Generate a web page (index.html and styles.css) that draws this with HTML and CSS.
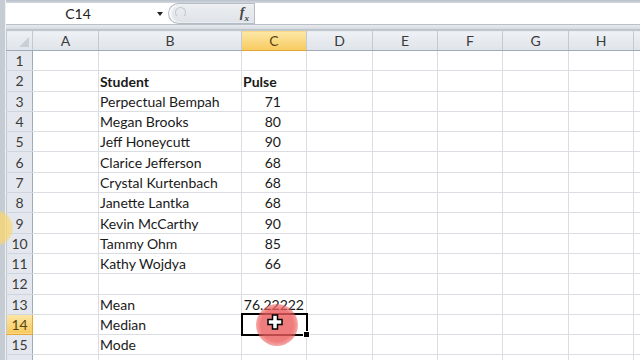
FILE: index.html
```html
<!DOCTYPE html>
<html lang="en">
<head>
    <meta charset="UTF-8">
    <title>Pulse - Excel</title>
    <link rel="stylesheet" href="styles.css">
</head>
<body>
    <div class="window">
        <div class="top-strip"></div>
        <div class="formula-bar">
            <div class="name-box">
                <span class="cell-ref">C14</span>
                <span class="drop-arrow"></span>
            </div>
            <div class="fx-capsule">
                <span class="grip"></span>
                <span class="fx">f<sub>x</sub></span>
            </div>
            <div class="formula-input"></div>
        </div>
        <div class="bar-gap"></div>

        <div class="sheet">
            <table class="grid">
                <colgroup>
                    <col class="w-rh">
                    <col class="w-a">
                    <col class="w-b">
                    <col class="w-c">
                    <col class="w-d">
                    <col class="w-e">
                    <col class="w-f">
                    <col class="w-g">
                    <col class="w-h">
                    <col class="w-i">
                </colgroup>
                <thead>
                    <tr>
                        <th class="corner"><span class="corner-tri"></span></th>
                        <th>A</th>
                        <th>B</th>
                        <th class="sel-head">C</th>
                        <th>D</th>
                        <th>E</th>
                        <th>F</th>
                        <th>G</th>
                        <th>H</th>
                        <th></th>
                    </tr>
                </thead>
                <tbody>
                    <tr><th>1</th><td></td><td></td><td></td><td></td><td></td><td></td><td></td><td></td><td></td></tr>
                    <tr><th>2</th><td></td><td class="bold">Student</td><td class="bold">Pulse</td><td></td><td></td><td></td><td></td><td></td><td></td></tr>
                    <tr><th>3</th><td></td><td>Perpectual Bempah</td><td class="num">71</td><td></td><td></td><td></td><td></td><td></td><td></td></tr>
                    <tr><th>4</th><td></td><td>Megan Brooks</td><td class="num">80</td><td></td><td></td><td></td><td></td><td></td><td></td></tr>
                    <tr><th>5</th><td></td><td>Jeff Honeycutt</td><td class="num">90</td><td></td><td></td><td></td><td></td><td></td><td></td></tr>
                    <tr><th>6</th><td></td><td>Clarice Jefferson</td><td class="num">68</td><td></td><td></td><td></td><td></td><td></td><td></td></tr>
                    <tr><th>7</th><td></td><td>Crystal Kurtenbach</td><td class="num">68</td><td></td><td></td><td></td><td></td><td></td><td></td></tr>
                    <tr><th>8</th><td></td><td>Janette Lantka</td><td class="num">68</td><td></td><td></td><td></td><td></td><td></td><td></td></tr>
                    <tr><th>9</th><td></td><td>Kevin McCarthy</td><td class="num">90</td><td></td><td></td><td></td><td></td><td></td><td></td></tr>
                    <tr><th>10</th><td></td><td>Tammy Ohm</td><td class="num">85</td><td></td><td></td><td></td><td></td><td></td><td></td></tr>
                    <tr><th>11</th><td></td><td>Kathy Wojdya</td><td class="num">66</td><td></td><td></td><td></td><td></td><td></td><td></td></tr>
                    <tr><th>12</th><td></td><td></td><td></td><td></td><td></td><td></td><td></td><td></td><td></td></tr>
                    <tr><th>13</th><td></td><td>Mean</td><td class="value">76.22222</td><td></td><td></td><td></td><td></td><td></td><td></td></tr>
                    <tr><th class="sel-head">14</th><td></td><td>Median</td><td class="active"></td><td></td><td></td><td></td><td></td><td></td><td></td></tr>
                    <tr><th>15</th><td></td><td>Mode</td><td></td><td></td><td></td><td></td><td></td><td></td><td></td></tr>
                    <tr><th></th><td></td><td></td><td></td><td></td><td></td><td></td><td></td><td></td><td></td></tr>
                </tbody>
            </table>

            <!-- click highlight from the screen recorder -->
            <div class="click-glow red"></div>
            <svg class="cursor" width="16" height="16" viewBox="0 0 16 16">
                <path d="M5.5 1h5v4.5H15v5h-4.5V15h-5v-4.5H1v-5h4.5z" fill="#fff" stroke="#000" stroke-width="1.5"/>
            </svg>
        </div>
    </div>
    <div class="click-glow yellow"></div>
</body>
</html>
```

FILE: styles.css
```css
html, body {
    margin: 0;
    padding: 0;
}
body {
    position: relative;
    width: 640px;
    height: 360px;
    overflow: hidden;
    background-color: #c6ccd4;
    font-family: Lato, "Liberation Sans", sans-serif;
}
.window {
    display: flex;
    flex-direction: column;
    height: 360px;
    margin-left: 5px;
    background-color: #fff;
    border-left: 1px solid #eef1f4;
}
.top-strip {
    height: 3px;
    background: linear-gradient(#b8c0ca, #d3d8de);
}
.formula-bar {
    display: flex;
    height: 21px;
    background-color: #fff;
    border-bottom: 1px solid #b9c0c8;
}
.name-box {
    display: flex;
    align-items: center;
    width: 162px;
}
.cell-ref {
    width: 144px;
    text-align: center;
    font-size: 14px;
    color: #222;
}
.drop-arrow {
    width: 0;
    height: 0;
    margin-left: 7px;
    border-left: 3px solid transparent;
    border-right: 3px solid transparent;
    border-top: 4px solid #222;
}
.fx-capsule {
    display: flex;
    align-items: center;
    justify-content: space-between;
    width: 86px;
    padding: 0 5px 0 6px;
    box-sizing: border-box;
    background: linear-gradient(#eceef1, #dfe3e8);
    border: 1px solid #b4bcc6;
    border-right: none;
    border-radius: 11px 0 0 11px;
    box-shadow: inset 2px 0 2px #fff;
}
.grip {
    width: 9px;
    height: 9px;
    border-radius: 50%;
    border: 1px solid #c3c8ce;
    border-bottom-color: transparent;
    margin-top: -2px;
}
.fx {
    font-family: "Liberation Serif", serif;
    font-style: italic;
    font-weight: bold;
    font-size: 14px;
    color: #444;
}
.fx sub {
    font-size: 9px;
}
.formula-input {
    flex: 1;
    border-left: 1px solid #b4bcc6;
    background-color: #fff;
}
.bar-gap {
    height: 4px;
    background: linear-gradient(#e6e9ed, #d7dce2);
    border-bottom: 1px solid #bcc3cb;
}

.sheet {
    position: relative;
    flex: 1;
    overflow: hidden;
}
.grid {
    border-collapse: collapse;
    table-layout: fixed;
    width: 660px;
    font-size: 14px;
    color: #1a1a1a;
}
.w-rh { width: 26px; }
.w-a { width: 66px; }
.w-b { width: 143px; }
.w-c { width: 65px; }
.w-d { width: 66px; }
.w-e { width: 65px; }
.w-f { width: 65px; }
.w-g { width: 66px; }
.w-h { width: 65px; }
.w-i { width: 33px; }

.grid tr {
    height: 20.3px;
}
.grid thead tr {
    height: 20px;
}
.grid th {
    font-weight: normal;
    color: #3b3b3b;
    background: linear-gradient(#eef1f5, #dfe4ea);
    border: 1px solid #c2c9d1;
    padding: 0;
    text-align: center;
    font-size: 14px;
}
.grid thead th {
    border-bottom-color: #9fabb8;
}
.grid tbody th {
    background: #e4e8ee;
    border-right-color: #9fabb8;
    border-top-color: #cfd5dc;
    border-bottom-color: #cfd5dc;
}
.grid th.sel-head {
    background: linear-gradient(#fce7a6, #f7ca5e);
    color: #5a4310;
    border-bottom-color: #e2a83a;
}
.grid tbody th.sel-head {
    border-right-color: #e2a83a;
}
.corner {
    position: relative;
}
.corner-tri {
    position: absolute;
    right: 3px;
    bottom: 3px;
    width: 0;
    height: 0;
    border-left: 10px solid transparent;
    border-bottom: 10px solid #c9cfd6;
}
.grid td {
    border: 1px solid #dadde1;
    padding: 0 3px 1px 1px;
    vertical-align: bottom;
    line-height: 17px;
    white-space: nowrap;
    overflow: visible;
}
.grid td.bold {
    font-weight: bold;
}
.grid td.num {
    text-align: right;
    padding-right: 25px;
}
.grid td.value {
    text-align: right;
    padding-right: 2px;
}
.grid td.active {
    position: relative;
    outline: 2px solid #000;
    outline-offset: -1px;
}
.grid td.active::after {
    content: "";
    position: absolute;
    right: -4px;
    bottom: -4px;
    width: 5px;
    height: 5px;
    background-color: #000;
    border: 1px solid #fff;
}

.click-glow {
    position: absolute;
    border-radius: 50%;
    pointer-events: none;
}
.click-glow.red {
    left: 250px;
    top: 274px;
    width: 42px;
    height: 42px;
    background: radial-gradient(circle, rgba(236, 92, 92, 0.8) 55%, rgba(236, 92, 92, 0.35) 82%, rgba(236, 92, 92, 0) 100%);
}
.click-glow.yellow {
    left: -23px;
    top: 210px;
    width: 36px;
    height: 36px;
    background: radial-gradient(circle, rgba(250, 214, 110, 0.75) 55%, rgba(250, 214, 110, 0) 100%);
}
.cursor {
    position: absolute;
    left: 261px;
    top: 284px;
}
```
